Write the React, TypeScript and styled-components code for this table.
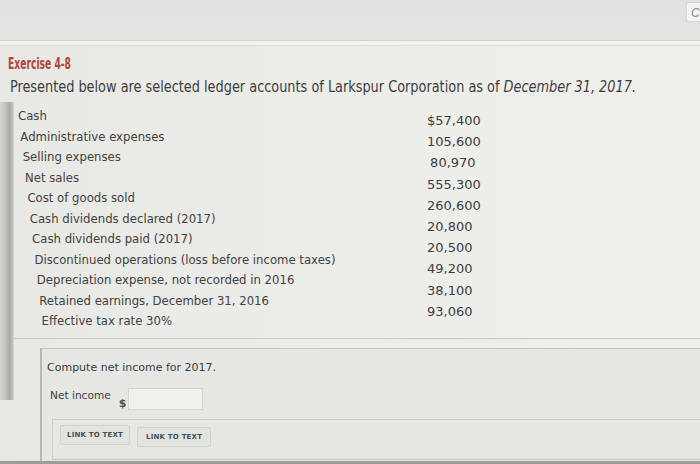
import React from "react";
import styled, { createGlobalStyle } from "styled-components";

const GlobalStyle = createGlobalStyle`
  html, body { margin: 0; padding: 0; }
  body {
    width: 700px;
    height: 464px;
    overflow: hidden;
    background: #ebebe7;
    font-family: "DejaVu Sans", Verdana, sans-serif;
  }
`;

const Page = styled.div`
  width: 700px;
  height: 464px;
  display: flex;
  flex-direction: column;
  overflow: hidden;
  background: linear-gradient(90deg, #e8e8e4 0%, #ededea 55%, #efefec 100%);
`;

const TopBar = styled.div`
  height: 40px;
  flex: none;
  display: flex;
  justify-content: flex-end;
  align-items: flex-start;
  background: linear-gradient(180deg, #e1e1df 0%, #e4e4e2 100%);
  border-bottom: 1px solid #d2d2cf;
`;

const ReloadButton = styled.div`
  width: 14px;
  height: 20px;
  margin-top: 2px;
  background: #f3f3f1;
  border: 1px solid #d6d6d3;
  border-right: none;
  border-radius: 3px 0 0 3px;
  color: #8a8a88;
  font: italic 12px "Liberation Sans", Arial, sans-serif;
  padding: 3px 0 0 4px;
  box-sizing: border-box;
`;

const SubBand = styled.div`
  height: 4px;
  flex: none;
  background: #f2f2ef;
  border-bottom: 1px solid #d9d9d5;
`;

const Header = styled.div`
  padding: 9px 0 0 8px;
  display: flex;
  flex-direction: column;
  gap: 4px;
  font-family: "DejaVu Sans Condensed", "Liberation Sans", sans-serif;
  white-space: nowrap;
`;

const Title = styled.div`
  color: #b0463a;
  font-size: 15px;
  line-height: 18px;
  font-weight: 600;
  transform: scaleX(0.68);
  transform-origin: left center;
`;

const Intro = styled.div`
  color: #3e3e3e;
  font-size: 15px;
  line-height: 20px;
  padding-left: 2px;
  transform: scaleX(0.955);
  transform-origin: left center;
`;

const Body = styled.div`
  flex: 1;
  display: flex;
  margin-top: 5px;
`;

const Strip = styled.div`
  width: 14px;
  flex: none;
  align-self: stretch;
  margin-bottom: 61px;
  background: linear-gradient(90deg, #d6d6d2 0%, #c4c4bf 40%, #a9a9a4 70%, #c2c2bd 90%, #dcdcd8 100%);
`;

const Main = styled.div`
  flex: 1;
  display: flex;
  flex-direction: column;
`;

const Ledger = styled.div`
  display: flex;
  height: 236px;
  border-bottom: 1px solid #c9c9c4;
`;

const LabelCol = styled.div`
  width: 413px;
  padding-top: 4px;
  display: flex;
  flex-direction: column;
`;

const Label = styled.div<{ $indent: number }>`
  height: 20.5px;
  line-height: 20.5px;
  font-size: 11.7px;
  color: #424242;
  padding-left: ${(p) => p.$indent}px;
  white-space: nowrap;
`;

const ValueCol = styled.div`
  width: 52px;
  padding-top: 8px;
  display: flex;
  flex-direction: column;
`;

const Value = styled.div<{ $shift: number }>`
  height: 21.2px;
  line-height: 21.2px;
  font-size: 13px;
  color: #3e3e3e;
  text-align: right;
  padding-right: ${(p) => p.$shift}px;
  white-space: nowrap;
`;

const ComputeBox = styled.div`
  margin-top: 9px;
  margin-left: 26px;
  flex: 1;
  border-top: 1px solid #c6c6c1;
  border-left: 2px solid #b9b9b4;
  background: #e6e7e2;
  padding: 12px 0 0 5px;
  display: flex;
  flex-direction: column;
`;

const Prompt = styled.div`
  font-size: 11px;
  color: #3c3c3c;
`;

const AnswerRow = styled.div`
  display: flex;
  align-items: flex-start;
  margin-top: 14px;
  padding-left: 3px;
`;

const AnswerLabel = styled.div`
  font-size: 10.6px;
  color: #3c3c3c;
  margin-top: 1px;
`;

const Dollar = styled.div`
  font-size: 11px;
  font-weight: bold;
  color: #505050;
  margin: 9px 2px 0 8px;
`;

const Input = styled.div`
  width: 73px;
  height: 20px;
  background: #f0f0ed;
  border: 1px solid #d3d3cf;
`;

const LinkPanel = styled.div`
  margin: 9px 0 0 5px;
  height: 41px;
  border-top: 1px solid #cdcdc8;
  border-left: 1px solid #cdcdc8;
  border-bottom: 1px solid #c8c8c3;
  display: flex;
  gap: 7px;
  padding: 5px 0 0 7px;
  box-sizing: border-box;
`;

const LinkButton = styled.div<{ $drop: number; $pad: number }>`
  height: 18px;
  margin-top: ${(p) => p.$drop}px;
  padding: 0 ${(p) => p.$pad}px;
  display: flex;
  align-items: center;
  background: #e2e3df;
  border: 1px solid #d1d2cd;
  border-radius: 2px;
  font-size: 7px;
  font-weight: bold;
  color: #46505b;
  letter-spacing: 0.2px;
`;

const BottomEdge = styled.div`
  height: 3px;
  flex: none;
  background: #9c9c98;
`;

const labels = [
  "Cash",
  "Administrative expenses",
  "Selling expenses",
  "Net sales",
  "Cost of goods sold",
  "Cash dividends declared (2017)",
  "Cash dividends paid (2017)",
  "Discontinued operations (loss before income taxes)",
  "Depreciation expense, not recorded in 2016",
  "Retained earnings, December 31, 2016",
  "Effective tax rate 30%",
];

const values = [
  "$57,400",
  "105,600",
  "80,970",
  "555,300",
  "260,600",
  "20,800",
  "20,500",
  "49,200",
  "38,100",
  "93,060",
];

export default function App() {
  return (
    <Page>
      <GlobalStyle />
      <TopBar>
        <ReloadButton>C</ReloadButton>
      </TopBar>
      <SubBand />
      <Header>
        <Title>Exercise 4-8</Title>
        <Intro>
          Presented below are selected ledger accounts of Larkspur Corporation as of <i>December 31, 2017.</i>
        </Intro>
      </Header>
      <Body>
        <Strip />
        <Main>
          <Ledger>
            <LabelCol>
              {labels.map((l, i) => (
                <Label key={l} $indent={4 + i * 2.35}>
                  {l}
                </Label>
              ))}
            </LabelCol>
            <ValueCol>
              {values.map((v, i) => (
                <Value key={v} $shift={i * 1.7}>
                  {v}
                </Value>
              ))}
            </ValueCol>
          </Ledger>
          <ComputeBox>
            <Prompt>Compute net income for 2017.</Prompt>
            <AnswerRow>
              <AnswerLabel>Net income</AnswerLabel>
              <Dollar>$</Dollar>
              <Input />
            </AnswerRow>
            <LinkPanel>
              <LinkButton $drop={0} $pad={6}>LINK TO TEXT</LinkButton>
              <LinkButton $drop={2} $pad={8}>LINK TO TEXT</LinkButton>
            </LinkPanel>
          </ComputeBox>
        </Main>
      </Body>
      <BottomEdge />
    </Page>
  );
}
